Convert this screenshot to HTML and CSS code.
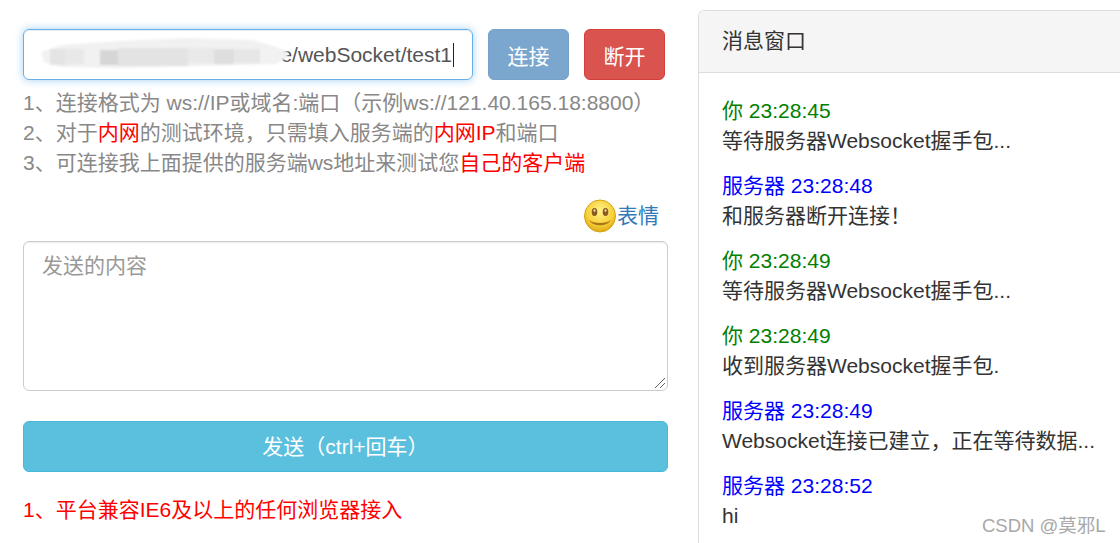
FILE: index.html
```html
<!DOCTYPE html>
<html>
<head>
    <meta charset="utf-8">
    <title>WebSocket 在线测试</title>
    <link rel="stylesheet" href="styles.css">
</head>
<body>
    <div class="page">
        <div class="left-col">
            <div class="connect-row">
                <div class="url-input">
                    <span class="url-text">e/webSocket/test1</span><span class="caret"></span>
                    <svg class="smudge" width="256" height="34" viewBox="0 0 256 34">
                        <defs>
                            <filter id="soft"><feGaussianBlur stdDeviation="1.2"/></filter>
                        </defs>
                        <g filter="url(#soft)">
                            <path d="M3 16 L24 9 L80 5 L150 2 L215 4 L238 11 L250 16 L249 22 L238 28 L160 30 L80 32 L24 31 L6 26 Z" fill="#f1f1f1"/>
                            <rect x="12" y="13" width="16" height="16" fill="#e4e4e4"/>
                            <rect x="28" y="13" width="18" height="15" fill="#e8e8e8"/>
                            <rect x="62" y="14" width="18" height="15" fill="#d6d6d6"/>
                            <rect x="80" y="12" width="70" height="18" fill="#e3e3e3"/>
                            <rect x="150" y="12" width="26" height="15" fill="#e9e9e9"/>
                            <rect x="176" y="13" width="20" height="15" fill="#dedede"/>
                            <rect x="196" y="13" width="26" height="14" fill="#e6e6e6"/>
                            <rect x="222" y="12" width="16" height="13" fill="#f2f2f2"/>
                        </g>
                    </svg>
                </div>
                <button class="btn btn-connect">连接</button>
                <button class="btn btn-close">断开</button>
            </div>

            <div class="tips">
                <div>1、连接格式为 ws://IP或域名:端口（示例ws://121.40.165.18:8800）</div>
                <div>2、对于<span class="red">内网</span>的测试环境，只需填入服务端的<span class="red">内网IP</span>和端口</div>
                <div>3、可连接我上面提供的服务端ws地址来测试您<span class="red">自己的客户端</span></div>
            </div>

            <div class="emoji-row">
                <svg width="34" height="34" viewBox="0 0 34 34">
                    <defs>
                        <radialGradient id="face" cx="50%" cy="35%" r="70%">
                            <stop offset="0" stop-color="#fff28a"/>
                            <stop offset="0.6" stop-color="#f8d23c"/>
                            <stop offset="1" stop-color="#d9a10c"/>
                        </radialGradient>
                    </defs>
                    <ellipse cx="17" cy="17" rx="15.5" ry="16" fill="url(#face)" stroke="#d6a21a"/>
                    <ellipse cx="11.5" cy="13" rx="2.8" ry="4" fill="#8a5a20"/>
                    <ellipse cx="22.5" cy="13" rx="2.8" ry="4" fill="#8a5a20"/>
                    <ellipse cx="11.5" cy="11.5" rx="1" ry="1.3" fill="#f6e6b0"/>
                    <ellipse cx="22.5" cy="11.5" rx="1" ry="1.3" fill="#f6e6b0"/>
                    <path d="M6 21 C10 28 24 28 28 21 C24 25 10 25 6 21 Z" fill="#a87414"/>
                </svg>
                <a class="emoji-link">表情</a>
            </div>

            <div class="send-box">
                <div class="placeholder">发送的内容</div>
                <svg class="grip" width="12" height="12" viewBox="0 0 12 12">
                    <path d="M1 11 L11 1 M6 11 L11 6" stroke="#666" stroke-width="1" fill="none"/>
                </svg>
            </div>

            <button class="btn btn-send">发送（ctrl+回车）</button>

            <div class="note">1、平台兼容IE6及以上的任何浏览器接入</div>
        </div>

        <div class="panel">
            <div class="panel-heading">消息窗口</div>
            <div class="panel-body">
                <div class="msg">
                    <div class="me">你 23:28:45</div>
                    <div>等待服务器Websocket握手包...</div>
                </div>
                <div class="msg">
                    <div class="server">服务器 23:28:48</div>
                    <div>和服务器断开连接！</div>
                </div>
                <div class="msg">
                    <div class="me">你 23:28:49</div>
                    <div>等待服务器Websocket握手包...</div>
                </div>
                <div class="msg">
                    <div class="me">你 23:28:49</div>
                    <div>收到服务器Websocket握手包.</div>
                </div>
                <div class="msg">
                    <div class="server">服务器 23:28:49</div>
                    <div>Websocket连接已建立，正在等待数据...</div>
                </div>
                <div class="msg">
                    <div class="server">服务器 23:28:52</div>
                    <div>hi</div>
                </div>
            </div>
        </div>
    </div>
    <div class="watermark">CSDN @莫邪L</div>
</body>
</html>
```

FILE: styles.css
```css
html, body {
    margin: 0;
    height: 543px;
    overflow: hidden;
    background-color: #fff;
}
body {
    font-family: "Liberation Sans", "Noto Sans CJK SC", sans-serif;
    font-size: 21px;
    line-height: 30px;
    color: #333;
    position: relative;
}
.page {
    display: flex;
    align-items: flex-start;
    padding: 10px 0 0 23px;
}
.left-col {
    width: 645px;
    flex-shrink: 0;
    padding-top: 19px;
}
.connect-row {
    display: flex;
}
.url-input {
    box-sizing: border-box;
    width: 450px;
    height: 51px;
    border: 1px solid #66afe9;
    border-radius: 6px;
    box-shadow: inset 0 1px 1px rgba(0,0,0,.075), 0 0 8px rgba(102,175,233,.6);
    display: flex;
    align-items: center;
    justify-content: flex-end;
    padding-right: 18px;
    position: relative;
    font-size: 21px;
    color: #555;
}
.smudge {
    position: absolute;
    left: 14px;
    top: 6px;
}
.caret {
    width: 1px;
    height: 24px;
    margin-left: 1px;
    background-color: #222;
}
.btn {
    box-sizing: border-box;
    font-family: inherit;
    font-size: 21px;
    color: #fff;
    border: 1px solid transparent;
    border-radius: 6px;
    padding: 0;
}
.btn-connect {
    width: 81px;
    height: 51px;
    margin-left: 15px;
    background-color: #7ba7cf;
    border-color: #75a1ca;
}
.btn-close {
    width: 81px;
    height: 51px;
    margin-left: 15px;
    background-color: #d9534f;
    border-color: #d43f3a;
}
.tips {
    margin-top: 8px;
    color: #888;
}
.red {
    color: #f00;
}
.emoji-row {
    display: flex;
    justify-content: flex-end;
    align-items: center;
    height: 34px;
    margin-top: 21px;
    padding-right: 9px;
}
.emoji-link {
    color: #337ab7;
}
.send-box {
    box-sizing: border-box;
    height: 150px;
    margin-top: 8px;
    border: 1px solid #ccc;
    border-radius: 6px;
    box-shadow: inset 0 1px 1px rgba(0,0,0,.075);
    padding: 9px 18px;
    position: relative;
}
.placeholder {
    color: #999;
}
.grip {
    position: absolute;
    right: 1px;
    bottom: 1px;
}
.btn-send {
    display: block;
    width: 100%;
    height: 51px;
    margin-top: 30px;
    padding-bottom: 4px;
    background-color: #5bc0de;
    border-color: #46b8da;
}
.note {
    margin-top: 23px;
    color: #f00;
}
.panel {
    box-sizing: border-box;
    width: 440px;
    height: 560px;
    flex-shrink: 0;
    margin-left: 30px;
    border: 1px solid #ddd;
    border-right: none;
    border-radius: 6px 0 0 6px;
}
.panel-heading {
    box-sizing: border-box;
    height: 62px;
    padding: 15px 23px;
    background-color: #f5f5f5;
    border-bottom: 1px solid #ddd;
    border-radius: 6px 0 0 0;
}
.panel-body {
    padding: 23px 23px 0;
}
.msg {
    margin-bottom: 15px;
}
.me {
    color: #008000;
}
.server {
    color: #00f;
}
.watermark {
    position: absolute;
    left: 982px;
    top: 511px;
    font-size: 18.5px;
    line-height: 30px;
    color: #a8a8a8;
}
```
